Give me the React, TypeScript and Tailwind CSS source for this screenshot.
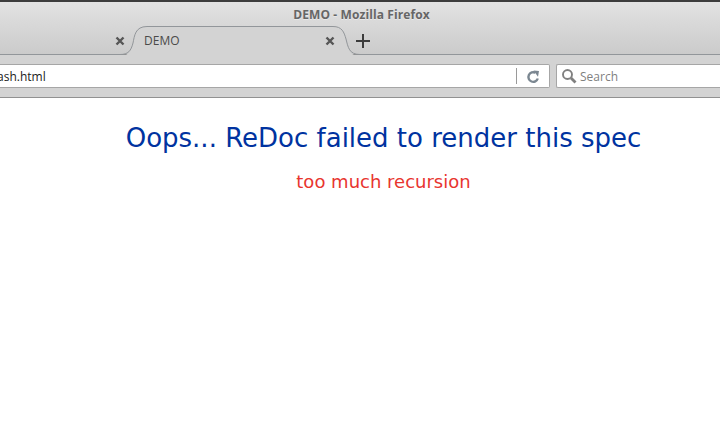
const sans = "font-['Open_Sans','Noto_Sans',sans-serif]";

function CloseIcon() {
  return (
    <svg width="10" height="10" viewBox="0 0 10 10" className="block">
      <path d="M1.500 1.500L8.500 8.500M8.500 1.500L1.500 8.500" stroke="#565656" strokeWidth="2.400" />
    </svg>
  );
}

export default function App() {
  return (
    <div className={`h-[447px] w-[720px] overflow-hidden bg-white ${sans}`}>
      <div className="h-[55px] border-t-2 border-t-[#3c3c3c] border-b border-b-[#919191] bg-gradient-to-b from-[#e2e2e2] to-[#cbcbcb]">
        <div className="flex h-[24px] items-center justify-center pt-[2px] pl-[3px] text-[12px] font-bold tracking-[0.1px] text-[#666666] [text-shadow:0_1px_0_rgba(255,255,255,0.4)]">
          DEMO - Mozilla Firefox
        </div>
        <div className="relative h-[28px]">
          <svg width="720" height="29" viewBox="0 0 720 29" className="absolute left-0 top-0">
            <path d="M126 29C129 27.500 131.500 24 133 17C134.500 10 135 0.500 147 0.500H333C342 0.500 344 6 346 13C348 21 349 27 354 29Z" fill="#d3d3d3" />
            <path d="M0 28.500H120C128 28.500 131 25 133 17C134.500 10 135 0.500 147 0.500H333C342 0.500 344 6 346 13C348 21 349 28.500 360 28.500H720" fill="none" stroke="#92969a" />
          </svg>
          <div className="relative flex h-full items-center pt-[2px]">
            <div className="ml-[115px]"><CloseIcon /></div>
            <span className="ml-[19px] text-[12px] text-[#4a4a4a]">DEMO</span>
            <div className="ml-[145px]"><CloseIcon /></div>
            <svg width="16" height="16" viewBox="0 0 16 16" className="ml-[20px] block">
              <path d="M8 1V15M1 8H15" stroke="#3c3c3c" strokeWidth="2" />
            </svg>
          </div>
        </div>
      </div>
      <div className="flex h-[43px] items-start gap-[6px] border-b border-b-[#919191] bg-[#d3d3d3] pt-[9px]">
        <div className="flex h-[24px] w-[550px] items-center rounded-r-[2px] border border-l-0 border-[#a6a6a6] bg-white">
          <span className="-ml-[3px] flex-1 pt-[2px] text-[12px] text-[#222222]">ash.html</span>
          <div className="h-[16px] w-px bg-[#9a9a9a]" />
          <svg width="14" height="14" viewBox="0 0 14 14" className="mx-[9px] mt-[2px] block">
            <path d="M11.800 8.500A4.800 4.800 0 1 1 9.500 2.800" fill="none" stroke="#7b8791" strokeWidth="2.400" />
            <path d="M7.500 0.500L13 1L12 6.800Z" fill="#7b8791" />
          </svg>
        </div>
        <div className="flex h-[24px] flex-1 items-center rounded-l-[2px] border border-r-0 border-[#a6a6a6] bg-white pl-[4px]">
          <svg width="16" height="16" viewBox="0 0 16 16" className="block">
            <circle cx="6.500" cy="6.500" r="4.500" fill="none" stroke="#808080" strokeWidth="1.900" />
            <path d="M10 10L14.500 14.500" stroke="#808080" strokeWidth="2.800" />
          </svg>
          <span className="ml-[3px] pt-[2px] text-[12px] text-[#7f7f7f]">Search</span>
        </div>
      </div>
      <div className="pl-[47px] text-center font-['DejaVu_Sans',sans-serif]">
        <h1 className="mt-[21px] text-[26px] leading-[38px] font-normal text-[#0033a0]">
          Oops... ReDoc failed to render this spec
        </h1>
        <p className="mt-[13px] text-[18px] leading-[24px] text-[#e8352f]">too much recursion</p>
      </div>
    </div>
  );
}
